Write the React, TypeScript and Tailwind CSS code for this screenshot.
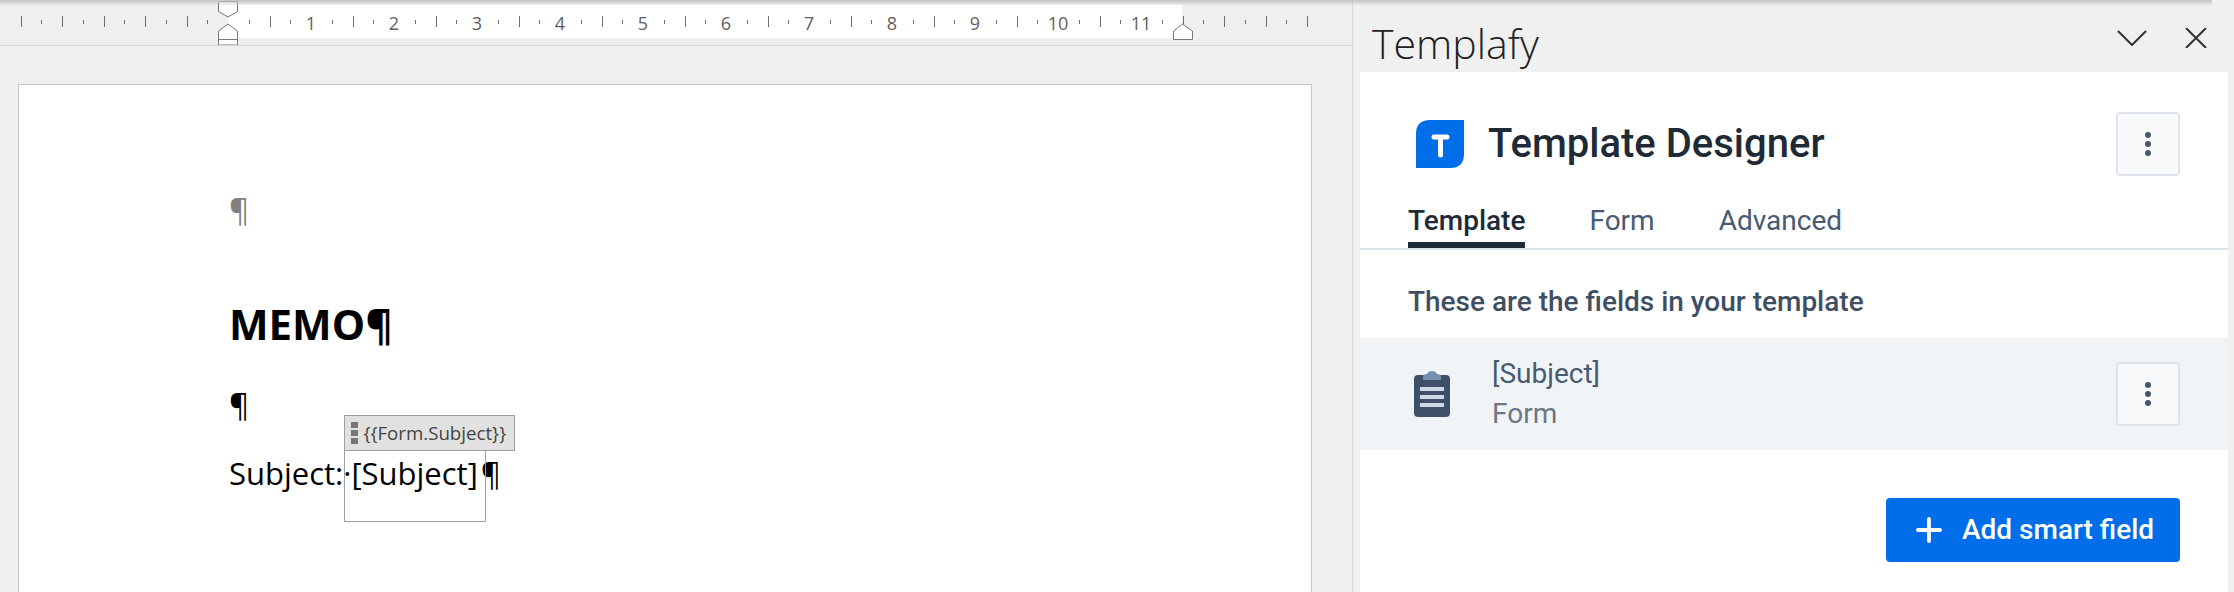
import React from 'react'
import { Plus } from 'lucide-react'

const rulerLabels = [1, 2, 3, 4, 5, 6, 7, 8, 9, 10, 11]

// tick marks run every quarter inch, 20.75px apart, outwards from the left margin.
// numbers replace the whole-inch ticks between the margins
const Ruler = () => {
  const ticks: { x: number; long: boolean }[] = []
  for (let i = -10; i <= 52; i++) {
    if (i >= 0 && i <= 44 && i % 4 === 0) continue
    ticks.push({ x: 228 + i * 20.75, long: i % 2 === 0 })
  }
  return (
    <svg width="1352" height="45" className="block">
      <rect x="228" y="4" width="954" height="34" fill="#ffffff" />
      {ticks.map((t) => (
        <line
          key={t.x}
          x1={Math.round(t.x) + 0.5}
          x2={Math.round(t.x) + 0.5}
          y1={t.long ? 16 : 20}
          y2={t.long ? 27 : 24}
          stroke="#6f6f6f"
        />
      ))}
      {rulerLabels.map((n, i) => (
        <text
          key={n}
          x={311 + i * 83}
          y="30"
          textAnchor="middle"
          fontSize="18"
          fill="#5f5f5f"
          fontFamily="'Open Sans', sans-serif"
        >
          {n}
        </text>
      ))}
      <path d="M218.5 1.5H237.5V11.5L228 17L218.5 11.5Z" fill="#ffffff" stroke="#777777" />
      <path d="M228 24L237.5 31V45H218.5V31Z" fill="#ffffff" stroke="#777777" />
      <line x1="218" x2="238" y1="39.5" y2="39.5" stroke="#777777" />
      <path d="M1182.5 24L1192.5 31V39.5H1173.5V31Z" fill="#ffffff" stroke="#777777" />
    </svg>
  )
}

const MoreButton = () => (
  <button className="flex h-[64px] w-[64px] flex-col items-center justify-center gap-[3px] rounded-[4px] border-2 border-[#dde4ec] bg-[#f8fafc]">
    <span className="h-[6px] w-[6px] rounded-full bg-[#42566e]" />
    <span className="h-[6px] w-[6px] rounded-full bg-[#42566e]" />
    <span className="h-[6px] w-[6px] rounded-full bg-[#42566e]" />
  </button>
)

const Logo = () => (
  <svg width="48" height="48" viewBox="0 0 48 48" className="shrink-0">
    <path d="M14 0H48V34Q48 48 34 48H0V14Q0 0 14 0Z" fill="#006ee8" />
    <path d="M18 17H31M24.5 17V35" stroke="#ffffff" strokeWidth="5" strokeLinecap="round" fill="none" />
  </svg>
)

const ClipboardIcon = () => (
  <svg width="36" height="46" viewBox="0 0 36 46" className="shrink-0">
    <rect x="0" y="4" width="36" height="42" rx="4" fill="#3e5169" />
    <path d="M9 9V6Q9 3 13 3Q14 0 18 0Q22 0 23 3Q27 3 27 6V9Z" fill="#7590b0" />
    <rect x="6" y="16" width="24" height="4" fill="#cdd9e8" />
    <rect x="6" y="24" width="24" height="4" fill="#cdd9e8" />
    <rect x="6" y="32" width="24" height="4" fill="#cdd9e8" />
  </svg>
)

const App: React.FC = () => {
  return (
    <div className="relative flex h-[592px] w-[2234px] overflow-hidden bg-[#f0f0f0]">
      {/* window shadow along the top */}
      <div className="absolute left-0 top-0 z-10 h-[6px] w-[2212px] bg-gradient-to-b from-[#c4c4c4] to-transparent" />

      {/* Document side */}
      <div className="flex h-full w-[1353px] shrink-0 flex-col border-r border-[#d9d9d9] bg-[#efefef]">
        <div className="border-b border-[#d4d4d4]">
          <Ruler />
        </div>
        <div className="flex-1 pl-[18px] pr-[40px] pt-[38px]">
          <div className="h-full border border-b-0 border-[#c6c6c6] bg-white pl-[210px] pt-[102px] font-['Open_Sans',sans-serif] text-black">
            <p className="text-[31px] leading-[44px] text-[#808080]">¶</p>
            <p className="mt-[63px] text-[42px] font-bold leading-[60px]">MEMO¶</p>
            <p className="mt-[28px] text-[31px] leading-[44px]">¶</p>
            <div className="mt-[25px] flex text-[31px] leading-[44px]">
              <span>Subject:·</span>
              <span className="relative">
                [Subject]
                <span className="absolute left-[-7px] top-[-1px] h-[72px] w-[142px] border border-[#a0a0a0]" />
                <span className="absolute left-[-7px] top-[-36px] flex h-[36px] w-[171px] items-center gap-[5px] whitespace-nowrap border border-[#a0a0a0] bg-[#e1e1e1] pl-[6px] text-[18.7px] leading-none text-[#444444]">
                  <span className="flex flex-col gap-[2px]">
                    <span className="h-[6px] w-[7px] bg-[#777777]" />
                    <span className="h-[6px] w-[7px] bg-[#777777]" />
                    <span className="h-[6px] w-[7px] bg-[#777777]" />
                  </span>
                  {'{{Form.Subject}}'}
                </span>
              </span>
              <span className="ml-[3px]">¶</span>
            </div>
          </div>
        </div>
      </div>

      {/* Task pane */}
      <div className="flex h-full flex-1 flex-col pl-[7px] pr-[6px]">
        <div className="flex h-[72px] items-start justify-between pl-[12px]">
          <span className="pt-[15px] font-['Open_Sans',sans-serif] text-[41px] font-light leading-[56px] text-[#222222]">
            Templafy
          </span>
          <div className="flex items-center gap-[38px] pr-[21px] pt-[28px]">
            <svg width="30" height="16" viewBox="0 0 30 16" fill="none" stroke="#333333" strokeWidth="2">
              <path d="M1 1L15 15L29 1" />
            </svg>
            <svg width="22" height="20" viewBox="0 0 22 20" fill="none" stroke="#333333" strokeWidth="2">
              <path d="M1 0L21 20M21 0L1 20" />
            </svg>
          </div>
        </div>

        <div className="flex-1 bg-white font-['Roboto',sans-serif]">
          <div className="flex items-center justify-between pl-[56px] pr-[48px] pt-[40px]">
            <div className="flex items-center gap-[24px]">
              <Logo />
              <h1 className="text-[40px] font-medium leading-[48px] text-[#1f2a37]">Template Designer</h1>
            </div>
            <MoreButton />
          </div>

          <div className="mt-[27px] flex h-[47px] gap-[64px] border-b-2 border-[#dde3ed] pl-[48px] text-[28px] leading-[36px] text-[#475a72]">
            <span className="h-[45px] border-b-[6px] border-[#1f2a37] font-medium text-[#1f2a37]">Template</span>
            <span>Form</span>
            <span>Advanced</span>
          </div>

          <p className="pl-[48px] pt-[34px] text-[28px] font-medium leading-[36px] text-[#3f4f63]">
            These are the fields in your template
          </p>

          <div className="mt-[18px] flex h-[112px] items-center justify-between bg-[#f1f4f7] pl-[54px] pr-[48px]">
            <div className="flex items-center gap-[42px]">
              <ClipboardIcon />
              <div className="flex flex-col gap-[4px]">
                <span className="text-[28px] leading-[36px] text-[#475a72]">[Subject]</span>
                <span className="text-[28px] leading-[36px] text-[#6b7785]">Form</span>
              </div>
            </div>
            <MoreButton />
          </div>

          <div className="flex justify-end pr-[48px] pt-[48px]">
            <button className="flex h-[64px] w-[294px] items-center gap-[14px] rounded-[4px] bg-[#006ee8] pl-[24px] text-[28px] font-medium text-white">
              <Plus size={38} strokeWidth={2.4} />
              Add smart field
            </button>
          </div>
        </div>
      </div>
    </div>
  )
}

export default App
